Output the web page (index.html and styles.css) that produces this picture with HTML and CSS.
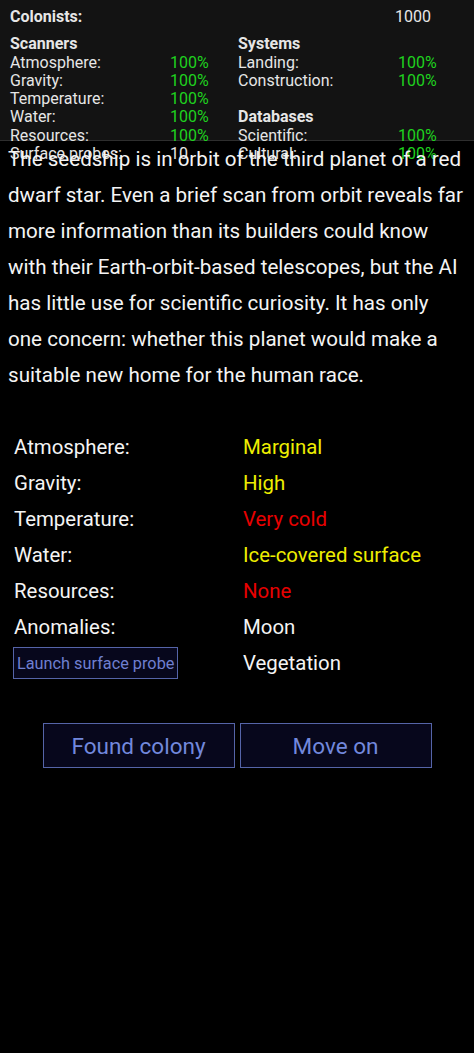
FILE: index.html
```html
<!DOCTYPE html>
<html>
<head>
<meta charset="utf-8">
<link rel="stylesheet" href="styles.css">
</head>
<body>
<header class="status">
  <div class="colonists">
    <span class="bold">Colonists:</span>
    <span>1000</span>
  </div>
  <div class="sections">
    <div class="section">
      <div class="bold span2">Scanners</div>
      <div>Atmosphere:</div><div class="ok">100%</div>
      <div>Gravity:</div><div class="ok">100%</div>
      <div>Temperature:</div><div class="ok">100%</div>
      <div>Water:</div><div class="ok">100%</div>
      <div>Resources:</div><div class="ok">100%</div>
      <div>Surface probes:</div><div>10</div>
    </div>
    <div class="section">
      <div class="bold span2">Systems</div>
      <div>Landing:</div><div class="ok">100%</div>
      <div>Construction:</div><div class="ok">100%</div>
      <div class="span2 blank"></div>
      <div class="bold span2">Databases</div>
      <div>Scientific:</div><div class="ok">100%</div>
      <div>Cultural:</div><div class="ok">100%</div>
    </div>
  </div>
</header>
<main class="main">
  <p class="story">The seedship is in orbit of the third planet of a red dwarf star. Even a brief scan from orbit reveals far more information than its builders could know with their Earth-orbit-based telescopes, but the AI has little use for scientific curiosity. It has only one concern: whether this planet would make a suitable new home for the human race.</p>
  <div class="planet">
    <div>Atmosphere:</div><div class="warn">Marginal</div>
    <div>Gravity:</div><div class="warn">High</div>
    <div>Temperature:</div><div class="bad">Very cold</div>
    <div>Water:</div><div class="warn">Ice-covered surface</div>
    <div>Resources:</div><div class="bad">None</div>
    <div>Anomalies:</div><div>Moon</div>
    <div><button class="probe">Launch surface probe</button></div><div>Vegetation</div>
  </div>
  <div class="actions">
    <button class="action">Found colony</button>
    <button class="action">Move on</button>
  </div>
</main>
</body>
</html>
```
FILE: styles.css
```css
html, body {
  margin: 0;
  padding: 0;
  background: #000;
}
body {
  font-family: Roboto, "Liberation Sans", sans-serif;
  color: #f2f2f2;
  width: 474px;
}
.status {
  box-sizing: border-box;
  height: 141px;
  padding: 8px 10px 0 10px;
  background: #131313;
  border-bottom: 1px solid #2e2e2e;
  font-size: 16px;
  line-height: 18.25px;
  color: #e6e6e6;
}
.bold {
  font-weight: 700;
}
.colonists {
  display: grid;
  grid-template-columns: 385px auto;
}
.sections {
  margin-top: 9px;
  display: grid;
  grid-template-columns: 228px 228px;
}
.section {
  display: grid;
  grid-template-columns: 160px auto;
  align-content: start;
}
.span2 {
  grid-column: 1 / 3;
}
.blank {
  height: 18.25px;
}
.ok {
  color: #1fd11f;
}
.main {
  position: relative;
}
.story {
  margin: 0;
  padding: 0 8px;
  font-size: 20.6px;
  line-height: 36px;
  color: #f4f4f4;
}
.planet {
  margin-top: 36px;
  padding-left: 14px;
  display: grid;
  grid-template-columns: 229px auto;
  grid-auto-rows: 36px;
  align-items: center;
  font-size: 20.4px;
  color: #f4f4f4;
}
.warn {
  color: #eeee00;
}
.bad {
  color: #e80000;
}
.probe {
  margin-left: -1px;
  box-sizing: border-box;
  height: 32px;
  padding: 0 3px;
  background: #07071c;
  border: 1px solid #5564a8;
  color: #6f7fd0;
  font-family: Roboto, "Liberation Sans", sans-serif;
  font-size: 16.3px;
  display: inline-flex;
  align-items: center;
}
.actions {
  margin-top: 42px;
  display: flex;
  justify-content: center;
  gap: 5px;
}
.action {
  box-sizing: border-box;
  width: 192px;
  height: 45px;
  background: #07071c;
  border: 1px solid #5564a8;
  color: #7288dc;
  font-family: Roboto, "Liberation Sans", sans-serif;
  font-size: 22.5px;
  padding: 0;
}
```
